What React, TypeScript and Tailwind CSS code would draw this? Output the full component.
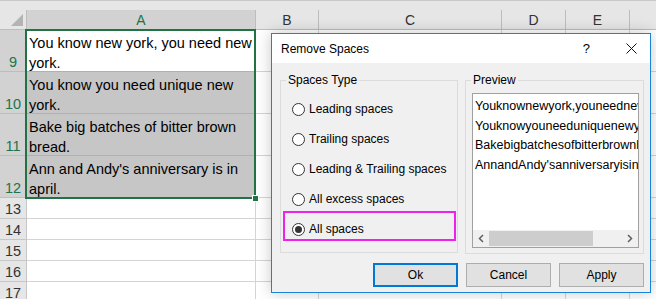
import { ReactNode } from 'react';

/**
 * Feuille Excel avec la boîte de dialogue « Remove Spaces » par-dessus.
 */
const rows = [
  { num: 9, lines: ['You know new york, you need new', 'york.'], tall: true, active: true },
  { num: 10, lines: ['You know you need unique new', 'york.'], tall: true },
  { num: 11, lines: ['Bake big batches of bitter brown', 'bread.'], tall: true },
  { num: 12, lines: ["Ann and Andy's anniversary is in", 'april.'], tall: true },
  { num: 13, lines: [] },
  { num: 14, lines: [] },
  { num: 15, lines: [] },
  { num: 16, lines: [] },
  { num: 17, lines: [] },
];

const options = ['Leading spaces', 'Trailing spaces', 'Leading & Trailing spaces', 'All excess spaces', 'All spaces'];

const preview = [
  'Youknownewyork,youneednewyork.',
  'Youknowyouneeduniquenewyork.',
  'Bakebigbatchesofbitterbrownbread.',
  "AnnandAndy'sanniversaryisinapril.",
];

function GroupBox({ label, className, children }: { label: string; className: string; children: ReactNode }) {
  return (
    <div className={`relative border border-[#dcdcdc] ${className}`}>
      <span className="absolute -top-[8px] left-[5px] bg-[#f0f0f0] px-[2px] text-[12px] leading-[14px] text-[#000]">{label}</span>
      {children}
    </div>
  );
}

function Radio({ checked }: { checked?: boolean }) {
  return (
    <span className="flex h-[13px] w-[13px] items-center justify-center rounded-full border border-[#333] bg-white">
      {checked && <span className="h-[7px] w-[7px] rounded-full bg-[#333]" />}
    </span>
  );
}

export default function App() {
  return (
    <div className="relative h-[299px] w-[656px] overflow-hidden bg-white font-['Liberation_Sans',Arial,sans-serif]">
      <div className="h-[10px] border-t border-[#c8c8c8] bg-[#e6e6e6]" />

      {/* en-têtes de colonnes */}
      <div className="flex h-[20px] bg-[#e6e6e6] text-[14px] leading-[20px] text-[#333]">
        <div className="relative w-[27px] border-r border-b border-[#bdbdbd]">
          <div className="absolute bottom-[3px] right-[3px] h-0 w-0 border-b-[12px] border-l-[12px] border-b-[#b4b4b4] border-l-transparent" />
        </div>
        <div className="w-[229px] border-r border-b border-[#bdbdbd] bg-[#d2d2d2] text-center text-[#217346]">A</div>
        <div className="w-[63px] border-r border-b border-[#bdbdbd] text-center">B</div>
        <div className="w-[183px] border-r border-b border-[#bdbdbd] text-center">C</div>
        <div className="w-[64px] border-r border-b border-[#bdbdbd] text-center">D</div>
        <div className="w-[64px] border-r border-b border-[#bdbdbd] text-center">E</div>
        <div className="flex-1 border-b border-[#bdbdbd]" />
      </div>

      {/* lignes */}
      {rows.map((r) => {
        const sel = r.lines.length > 0;
        return (
          <div key={r.num} className={`flex ${r.tall ? 'h-[42px]' : 'h-[21px]'} text-[14.5px] leading-[20px]`}>
            <div
              className={`flex w-[27px] items-end justify-center border-r border-b leading-[17px] ${
                sel ? 'border-[#bdbdbd] bg-[#d2d2d2] text-[#217346]' : 'border-[#c6c6c6] bg-[#e6e6e6] text-[#333]'
              }`}
            >
              {r.num}
            </div>
            <div
              className={`w-[229px] border-r border-b pl-[2px] pt-[3px] text-black ${
                sel ? (r.active ? 'border-[#b0b0b0] bg-white' : 'border-[#b0b0b0] bg-[#c6c6c6]') : 'border-[#d4d4d4]'
              }`}
            >
              {r.lines.map((l) => (
                <div key={l} className="whitespace-nowrap">
                  {l}
                </div>
              ))}
            </div>
            <div className="w-[63px] border-r border-b border-[#d4d4d4]" />
            <div className="w-[183px] border-r border-b border-[#d4d4d4]" />
            <div className="w-[64px] border-r border-b border-[#d4d4d4]" />
            <div className="w-[64px] border-r border-b border-[#d4d4d4]" />
            <div className="flex-1 border-b border-[#d4d4d4]" />
          </div>
        );
      })}

      {/* sélection */}
      <div className="absolute left-[25px] top-[29px] h-[170px] w-[231px] border-2 border-[#217346]" />
      <div className="absolute left-[252px] top-[195px] h-[7px] w-[7px] border border-white bg-[#217346]" />

      {/* boîte de dialogue */}
      <div className="absolute left-[271px] top-[33px] flex h-[260px] w-[380px] flex-col border border-[#1883d7] bg-[#f0f0f0] text-[12px] text-black shadow-[0_0_14px_rgba(0,0,0,0.22)]">
        <div className="flex h-[29px] items-center bg-white pl-[9px]">
          <span>Remove Spaces</span>
          <span className="ml-auto mr-[36px] text-[13px]">?</span>
          <svg width="11" height="11" viewBox="0 0 11 11" className="mr-[13px]">
            <path d="M0.5 0.5 L10.5 10.5 M10.5 0.5 L0.5 10.5" stroke="#111" strokeWidth="1" />
          </svg>
        </div>

        <div className="flex gap-[7px] pl-[8px] pt-[17px]">
          <GroupBox label="Spaces Type" className="h-[173px] w-[178px]">
            <div className="flex flex-col pl-[11px] pt-[13px]">
              {options.map((o, i) => (
                <div key={o} className="flex h-[30px] items-center gap-[4px]">
                  <Radio checked={i === 4} />
                  <span>{o}</span>
                </div>
              ))}
            </div>
            <div className="absolute left-[2px] top-[130px] h-[30px] w-[173px] border-2 border-[#f020f0]" />
          </GroupBox>

          <GroupBox label="Preview" className="h-[174px] w-[179px]">
            <div className="ml-[6px] mt-[12px] flex h-[155px] w-[167px] flex-col border border-[#a0a0a0] bg-white">
              <div className="flex-1 overflow-hidden pl-[2px] pt-[3px] text-[12.5px] leading-[19.5px]">
                {preview.map((p) => (
                  <div key={p} className="whitespace-nowrap">
                    {p}
                  </div>
                ))}
              </div>
              <div className="flex h-[17px] items-center bg-[#f0f0f0]">
                <div className="flex w-[16px] justify-center">
                  <svg width="6" height="9" viewBox="0 0 6 9">
                    <path d="M5 1 L1.5 4.5 L5 8" fill="none" stroke="#606060" strokeWidth="1.5" />
                  </svg>
                </div>
                <div className="h-[15px] w-[104px] bg-[#cdcdcd]" />
                <div className="ml-auto flex w-[17px] justify-center">
                  <svg width="6" height="9" viewBox="0 0 6 9">
                    <path d="M1 1 L4.5 4.5 L1 8" fill="none" stroke="#606060" strokeWidth="1.5" />
                  </svg>
                </div>
              </div>
            </div>
          </GroupBox>
        </div>

        <div className="mt-[9px] flex justify-end gap-[8px] pr-[6px]">
          <button type="button" className="h-[24px] w-[85px] border-2 border-[#0078d7] bg-[#e1e1e1]">
            Ok
          </button>
          <button type="button" className="h-[24px] w-[85px] border border-[#adadad] bg-[#e1e1e1]">
            Cancel
          </button>
          <button type="button" className="h-[24px] w-[85px] border border-[#adadad] bg-[#e1e1e1]">
            Apply
          </button>
        </div>
      </div>
    </div>
  );
}
